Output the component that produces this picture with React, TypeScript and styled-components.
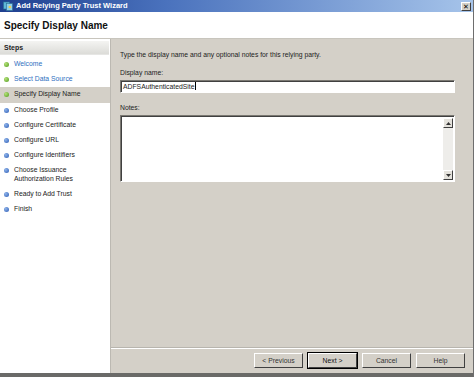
import React from 'react';
import styled, { createGlobalStyle } from 'styled-components';

const GlobalStyle = createGlobalStyle`
  html, body {
    margin: 0;
    padding: 0;
    width: 474px;
    height: 377px;
    overflow: hidden;
    background: #d4d0c8;
  }
  * { box-sizing: border-box; }
`;

const Window = styled.div`
  display: flex;
  flex-direction: column;
  width: 474px;
  height: 377px;
  font-family: "Liberation Sans", "DejaVu Sans", sans-serif;
  color: #1e1e1e;
  border-right: 1px solid #6e6e6e;
`;

const TitleBar = styled.div`
  display: flex;
  align-items: center;
  height: 12px;
  padding: 0 2px 0 3px;
  background: linear-gradient(to right, #1e3f8f 0%, #4a72bd 35%, #a6c4ea 100%);
  color: #ffffff;
  font-size: 7.5px;
  font-weight: bold;
`;

const TitleText = styled.span`
  flex: 1;
  margin-left: 3px;
  line-height: 12px;
`;

const CloseButton = styled.div`
  display: flex;
  align-items: center;
  justify-content: center;
  width: 10px;
  height: 9px;
  background: #d4d0c8;
  border: 1px solid;
  border-color: #ffffff #404040 #404040 #ffffff;
  font-size: 7px;
  line-height: 1;
  color: #000;
`;

const Header = styled.div`
  display: flex;
  align-items: center;
  height: 27px;
  padding-left: 4px;
  background: #ffffff;
  border-bottom: 1px solid #c8c5bd;
  font-size: 10px;
  font-weight: bold;
  color: #111;
`;

const Body = styled.div`
  display: flex;
  flex: 1;
  min-height: 0;
`;

const StepsPanel = styled.div`
  width: 111px;
  background: #ffffff;
  border-right: 1px solid #bcb9b2;
  padding-top: 2px;
`;

const StepsHeader = styled.div`
  height: 14px;
  padding-left: 4px;
  line-height: 14px;
  font-size: 7px;
  font-weight: bold;
  background: linear-gradient(to bottom, #f4f4f2 0%, #dcdcd8 100%);
  border-bottom: 1px solid #e6e6e4;
  margin-right: 1px;
`;

const StepList = styled.ul`
  list-style: none;
  margin: 0;
  padding: 2px 0 0;
`;

const StepItem = styled.li<{ $current?: boolean; $link?: boolean }>`
  display: flex;
  align-items: flex-start;
  padding: 3px 2px 3px 4px;
  min-height: 15.2px;
  font-size: 6.8px;
  line-height: 8.6px;
  color: ${(p) => (p.$link ? '#2f6fc0' : '#222')};
  background: ${(p) => (p.$current ? '#d4d0c8' : 'transparent')};
`;

const Dot = styled.span<{ $done?: boolean }>`
  flex: none;
  width: 5px;
  height: 5px;
  margin: 2px 5px 0 0;
  border-radius: 50%;
  background: ${(p) =>
    p.$done
      ? 'radial-gradient(circle at 35% 35%, #b6e27a, #4f9a1c)'
      : 'radial-gradient(circle at 35% 35%, #8fb4ea, #2b5bb4)'};
`;

const Main = styled.div`
  display: flex;
  flex-direction: column;
  flex: 1;
  background: #d4d0c8;
`;

const Content = styled.div`
  flex: 1;
  padding: 12px 18px 0 9px;
  font-size: 6.8px;
  color: #222;
`;

const Intro = styled.div`
  margin-bottom: 11px;
`;

const FieldLabel = styled.div`
  margin-bottom: 4px;
`;

const TextBox = styled.div`
  height: 13px;
  margin-bottom: 11px;
  padding-left: 2px;
  background: #ffffff;
  border: 1px solid;
  border-color: #7a7872 #ffffff #ffffff #7a7872;
  box-shadow: inset 1px 1px 0 #404040;
  font-size: 6.8px;
  line-height: 11px;
`;

const Caret = styled.span`
  display: inline-block;
  width: 1px;
  height: 8px;
  margin-left: 1px;
  vertical-align: -1px;
  background: #000;
`;

const NotesBox = styled.div`
  display: flex;
  justify-content: flex-end;
  height: 67px;
  background: #ffffff;
  border: 1px solid;
  border-color: #7a7872 #ffffff #ffffff #7a7872;
  box-shadow: inset 1px 1px 0 #404040;
  padding: 2px 1px 1px 0;
`;

const ScrollTrack = styled.div`
  display: flex;
  flex-direction: column;
  justify-content: space-between;
  width: 10px;
  background: #eeedea;
`;

const ScrollArrow = styled.div`
  display: flex;
  align-items: center;
  justify-content: center;
  height: 10px;
  background: #e4e2dc;
  border: 1px solid;
  border-color: #ffffff #404040 #404040 #ffffff;
`;

const ButtonBar = styled.div`
  display: flex;
  justify-content: flex-end;
  gap: 5px;
  height: 25px;
  padding: 4px 8px 0 0;
  border-top: 1px solid #ffffff;
  box-shadow: 0 -1px 0 #b8b5ae;
`;

const Button = styled.div<{ $default?: boolean }>`
  display: flex;
  align-items: center;
  justify-content: center;
  width: 49px;
  height: 15px;
  font-size: 6.8px;
  background: #d4d0c8;
  border: 1px solid;
  border-color: #ffffff #404040 #404040 #ffffff;
  outline: ${(p) => (p.$default ? '1px solid #000' : 'none')};
  color: ${(p) => (p.$default ? '#111' : '#333')};
`;

const BottomStrip = styled.div`
  height: 4px;
  background: #6a6a68;
`;

const WizardIcon = () => (
  <svg width="10" height="10" viewBox="0 0 10 10">
    <rect x="0.5" y="1" width="6" height="7" fill="#5fb6d8" stroke="#2a6f92" strokeWidth="0.6" />
    <rect x="3.5" y="2.5" width="6" height="7" fill="#8fd0ea" stroke="#2a6f92" strokeWidth="0.6" />
    <path d="M5 6 L7 4.5 L8.5 6 L7 7.5 Z" fill="#f4c94a" />
  </svg>
);

const ArrowUp = () => (
  <svg width="5" height="3" viewBox="0 0 5 3">
    <path d="M0 3 L2.5 0 L5 3 Z" fill="#333" />
  </svg>
);

const ArrowDown = () => (
  <svg width="5" height="3" viewBox="0 0 5 3">
    <path d="M0 0 L2.5 3 L5 0 Z" fill="#333" />
  </svg>
);

type Step = { label: React.ReactNode; done?: boolean; link?: boolean; current?: boolean };

const steps: Step[] = [
  { label: 'Welcome', done: true, link: true },
  { label: 'Select Data Source', done: true, link: true },
  { label: 'Specify Display Name', done: true, current: true },
  { label: 'Choose Profile' },
  { label: 'Configure Certificate' },
  { label: 'Configure URL' },
  { label: 'Configure Identifiers' },
  { label: <>Choose Issuance<br />Authorization Rules</> },
  { label: 'Ready to Add Trust' },
  { label: 'Finish' },
];

export default function App() {
  return (
    <>
      <GlobalStyle />
      <Window>
        <TitleBar>
          <WizardIcon />
          <TitleText>Add Relying Party Trust Wizard</TitleText>
          <CloseButton>✕</CloseButton>
        </TitleBar>
        <Header>Specify Display Name</Header>
        <Body>
          <StepsPanel>
            <StepsHeader>Steps</StepsHeader>
            <StepList>
              {steps.map((s, i) => (
                <StepItem key={i} $current={s.current} $link={s.link}>
                  <Dot $done={s.done} />
                  <span>{s.label}</span>
                </StepItem>
              ))}
            </StepList>
          </StepsPanel>
          <Main>
            <Content>
              <Intro>Type the display name and any optional notes for this relying party.</Intro>
              <FieldLabel>Display name:</FieldLabel>
              <TextBox>
                ADFSAuthenticatedSite
                <Caret />
              </TextBox>
              <FieldLabel>Notes:</FieldLabel>
              <NotesBox>
                <ScrollTrack>
                  <ScrollArrow><ArrowUp /></ScrollArrow>
                  <ScrollArrow><ArrowDown /></ScrollArrow>
                </ScrollTrack>
              </NotesBox>
            </Content>
            <ButtonBar>
              <Button>&lt; Previous</Button>
              <Button $default>Next &gt;</Button>
              <Button>Cancel</Button>
              <Button>Help</Button>
            </ButtonBar>
          </Main>
        </Body>
        <BottomStrip />
      </Window>
    </>
  );
}
